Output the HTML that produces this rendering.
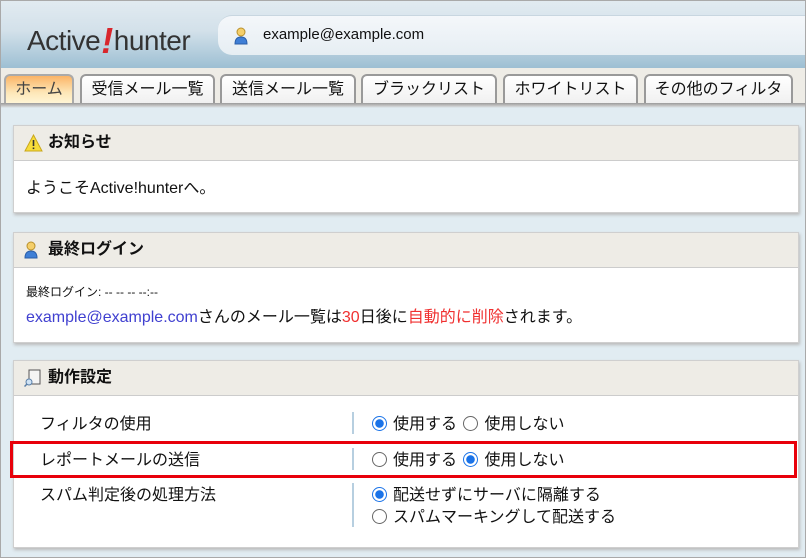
<!DOCTYPE html>
<html><head><meta charset="utf-8"><style>
*{margin:0;padding:0;box-sizing:border-box}
body{width:806px;height:558px;overflow:hidden;font-family:"Liberation Sans","Noto Sans CJK JP",sans-serif;background:#e1ecf2;position:relative;color:#111}
.frame{position:absolute;left:0;top:0;width:806px;height:558px;border:1px solid #a9a9a9;pointer-events:none;z-index:9}
.hdr{position:absolute;left:0;top:0;width:806px;height:68px;background:linear-gradient(#e2ebf1 0%,#d3e1ea 45%,#9dbfd3 100%)}
.logo{position:absolute;left:27px;top:17px;font-size:28px;color:#333;letter-spacing:-0.5px;font-weight:normal;white-space:nowrap}
.logo b{color:#d8262c;font-style:italic;font-weight:bold;font-size:36px;position:relative;top:3px;margin:0 1px}
.addr{position:absolute;left:218px;top:15px;width:600px;height:40px;border-radius:14px 0 0 14px;background:linear-gradient(#f4f7fa,#e6eef3);border-top:1px solid #c8d6e0}
.addr span{position:absolute;left:45px;top:10px;font-size:15px;color:#111}
.tabbar{position:absolute;left:0;top:68px;width:806px;height:36px;background:#eeece6}
.line{position:absolute;left:0;top:103px;width:806px;height:5px;background:linear-gradient(#9a9a9a,#c9c9c9 60%,#e1ecf2)}
.tab{position:absolute;top:74px;height:30px;border:2px solid #999;border-bottom:none;border-radius:6px 6px 0 0;background:linear-gradient(#fff,#f0f0f0);font-size:16px;text-align:center;line-height:27px;color:#111}
.tab.on{background:linear-gradient(#fbb466,#fde7b8 60%,#fff6d8);border-color:#aaa;color:#444}
.pan{position:absolute;left:13px;width:786px;background:#fff;border:1px solid #cfcfcf;box-shadow:1px 2px 3px #bbb}
.ph{height:35px;background:#eeece6;border-bottom:1px solid #ccc;font-weight:bold;font-size:16px;line-height:34px;padding-left:34px;position:relative}
.ph svg{position:absolute;left:10px;top:8px}
.t{position:absolute;font-size:16px;white-space:nowrap}
.r{display:inline-block;width:15px;height:15px;border-radius:50%;border:1px solid #666;vertical-align:-2px;margin-right:6px;background:#fff}
.r.c{border:1.5px solid #1a73e8;background:radial-gradient(circle,#1a73e8 0 4px,#fff 4.5px)}
.sep{position:absolute;left:338px;width:2px;background:#b7cfe0}
</style></head><body>
<div class="hdr">
<div class="logo">Active<b>!</b>hunter</div>
<div class="addr">
<svg style="position:absolute;left:16px;top:11px" width="14" height="18" viewBox="0 0 14 18"><circle cx="7" cy="5" r="4" fill="#f5cf6a" stroke="#b8902c"/><path d="M1 17 Q1 10 7 10 Q13 10 13 17Z" fill="#3f7fd6" stroke="#2a5ea8"/></svg>
<span>example@example.com</span></div>
</div>
<div class="tabbar"></div>
<div class="tab on" style="left:4px;width:70px">ホーム</div>
<div class="tab" style="left:80px;width:135px">受信メール一覧</div>
<div class="tab" style="left:220px;width:136px">送信メール一覧</div>
<div class="tab" style="left:361px;width:136px">ブラックリスト</div>
<div class="tab" style="left:503px;width:135px">ホワイトリスト</div>
<div class="tab" style="left:644px;width:149px">その他のフィルタ</div>
<div class="line"></div>

<div class="pan" style="top:125px;height:88px">
<div class="ph"><svg width="19" height="18" viewBox="0 0 19 18"><path d="M9.5 1 L18 17 H1Z" fill="#f7dc3a" stroke="#c9a71c"/><rect x="8.7" y="6" width="1.6" height="6" fill="#333"/><rect x="8.7" y="13.5" width="1.6" height="1.6" fill="#333"/></svg>お知らせ</div>
<div class="t" style="left:12px;top:48px">ようこそActive!hunterへ。</div>
</div>

<div class="pan" style="top:232px;height:111px">
<div class="ph"><svg width="14" height="18" viewBox="0 0 14 18"><circle cx="7" cy="5" r="4" fill="#f5cf6a" stroke="#b8902c"/><path d="M1 17 Q1 10 7 10 Q13 10 13 17Z" fill="#3f7fd6" stroke="#2a5ea8"/></svg>最終ログイン</div>
<div class="t" style="left:12px;top:50px;font-size:12px">最終ログイン: -- -- -- --:--</div>
<div class="t" style="left:12px;top:70px"><span style="color:#4040d0">example@example.com</span>さんのメール一覧は<span style="color:#f03030">30</span>日後に<span style="color:#f03030">自動的に削除</span>されます。</div>
</div>

<div class="pan" style="top:360px;height:188px">
<div class="ph"><svg width="18" height="18" viewBox="0 0 18 18"><rect x="5" y="1" width="11" height="14" fill="#f4f4f4" stroke="#555"/><circle cx="5" cy="13" r="3" fill="#cfe3f5" stroke="#5a7fa8"/><path d="M3 15 L0.5 17.5" stroke="#5a7fa8" stroke-width="1.5"/></svg>動作設定</div>
<div class="t" style="left:26px;top:49px">フィルタの使用</div>
<div class="t" style="left:26px;top:85px">レポートメールの送信</div>
<div class="t" style="left:26px;top:120px">スパム判定後の処理方法</div>
<div class="sep" style="top:51px;height:22px"></div>
<div class="sep" style="top:87px;height:22px"></div>
<div class="sep" style="top:122px;height:44px"></div>
<div class="t" style="left:358px;top:49px"><span class="r c"></span>使用する <span class="r" style="margin-left:2px"></span>使用しない</div>
<div class="t" style="left:358px;top:85px"><span class="r"></span>使用する <span class="r c" style="margin-left:2px"></span>使用しない</div>
<div class="t" style="left:358px;top:120px"><span class="r c"></span>配送せずにサーバに隔離する</div>
<div class="t" style="left:358px;top:142px"><span class="r"></span>スパムマーキングして配送する</div>
</div>
<div style="position:absolute;left:10px;top:441px;width:787px;height:37px;border:3px solid #e8000a"></div>
<div class="frame"></div>
</body></html>
